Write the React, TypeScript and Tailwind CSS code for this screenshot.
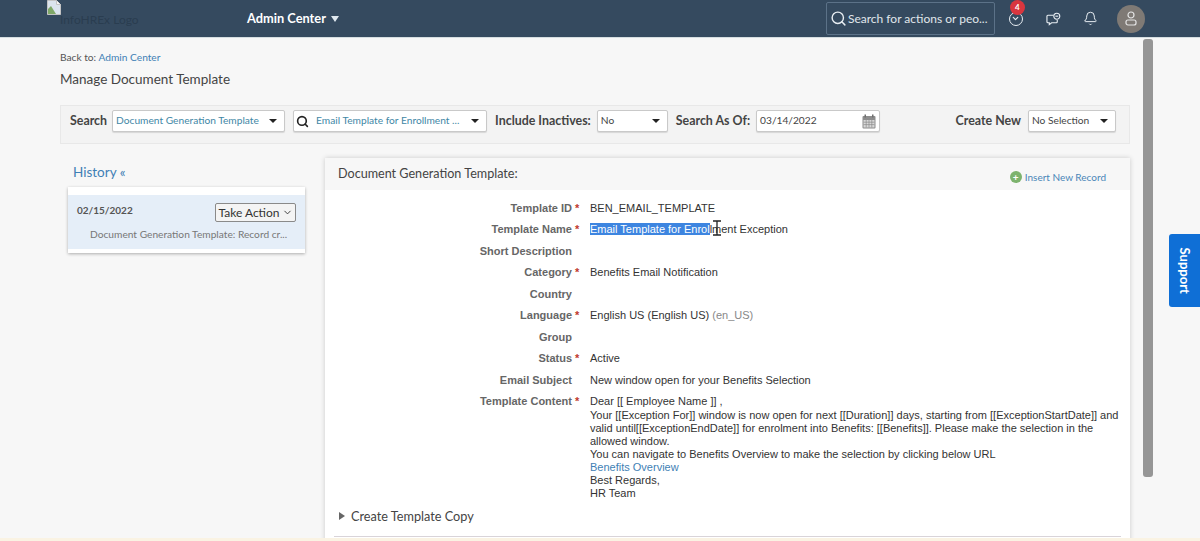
import { Bell, ChevronDown, Search } from "lucide-react";

const sans = "font-['Lato','Open_Sans',sans-serif]";

function Caret() {
  return <span className="ml-auto h-0 w-0 shrink-0 border-x-[4px] border-t-[4px] border-x-transparent border-t-[#222]" />;
}

function Select(props: { text: string; width: string; blue?: boolean; icon?: boolean }) {
  return (
    <div className={`flex h-[22px] items-center rounded-[2px] border border-[#c9c9c9] bg-white pl-[3px] pr-[7px] shadow-[0_1px_1px_rgba(0,0,0,0.12)] ${props.width}`}>
      {props.icon && <Search size={13} strokeWidth={3} className="mr-[7px] ml-[-1px] text-[#222]" />}
      <span className={`text-[10.2px] whitespace-nowrap ${props.blue ? "text-[#3f87a6]" : "text-[#444]"}`}>{props.text}</span>
      <Caret />
    </div>
  );
}

function BarLabel(props: { text: string; className?: string }) {
  return <span className={`mt-[1px] text-[12.4px] leading-[20px] font-bold whitespace-nowrap text-[#444] ${props.className ?? ""}`}>{props.text}</span>;
}

function Row(props: { label: string; required?: boolean; children?: React.ReactNode; height?: string }) {
  return (
    <div className={`flex items-start ${props.height ?? "h-[21.5px]"}`}>
      <div className="w-[247px] text-right text-[11px] leading-[13px] font-bold whitespace-nowrap text-[#666]">{props.label}</div>
      <div className="w-[18px] pl-[3px] text-[11px] leading-[13px] font-bold text-[#c0392b]">{props.required ? "*" : ""}</div>
      <div className="text-[11px] leading-[13px] text-[#333]">{props.children}</div>
    </div>
  );
}

function CalendarIcon() {
  return (
    <svg className="ml-auto" width="14" height="15" viewBox="0 0 14 15">
      <rect x="0.5" y="2" width="13" height="12.5" rx="1" fill="#8c8c8c" />
      <rect x="2.5" y="0.5" width="1.5" height="3" fill="#6f6f6f" />
      <rect x="10" y="0.5" width="1.5" height="3" fill="#6f6f6f" />
      <path d="M1.5 6h11v7.5h-11z" fill="#d8d8d8" />
      <path d="M1.5 8.2h11M1.5 10.6h11M4.2 6v7.5M7 6v7.5M9.8 6v7.5" stroke="#8c8c8c" strokeWidth="0.7" />
    </svg>
  );
}

function BrokenImage() {
  return (
    <svg className="absolute top-0 left-0" width="14" height="15" viewBox="0 0 14 15">
      <path d="M0.5 0.5h9l4 4v10h-13z" fill="#dbe4ee" stroke="#c4c4c4" />
      <path d="M9.5 0.5v4h4" fill="#f5f5f5" stroke="#c4c4c4" />
      <path d="M1 14V9l3-3 5 8z" fill="#7fa868" />
    </svg>
  );
}

export default function App() {
  return (
    <div className={`relative flex h-[541px] w-[1200px] flex-col overflow-hidden bg-[#f7f7f7] ${sans}`}>
      <header className="flex h-[38px] shrink-0 items-center border-b border-[#d5dde0] bg-[#354a5f]">
        <div className="relative ml-[47px] h-full w-[200px]">
          <BrokenImage />
          <span className="absolute top-[11px] left-[13px] text-[12px] text-[#2a3d50]">InfoHREx Logo</span>
        </div>
        <div className="flex items-center gap-[5px] text-[12.8px] font-bold text-white">
          Admin Center
          <span className="mt-[1px] h-0 w-0 border-x-[4.5px] border-t-[6px] border-x-transparent border-t-[#dfe8ef]" />
        </div>
        <div className="ml-[487px] flex h-[33px] w-[169px] items-center rounded-[2px] border border-[#5c7288] pl-[3px]">
          <Search size={17} strokeWidth={2} className="text-[#e8eef3]" />
          <span className="mt-[1px] ml-[1px] text-[12px] whitespace-nowrap text-[#e0e7ec]">Search for actions or peo...</span>
        </div>
        <div className="relative ml-[14px] flex h-[14px] w-[14px] items-center justify-center rounded-full border-[1.5px] border-[#e8eef3]">
          <ChevronDown size={9} strokeWidth={3} className="text-[#e8eef3]" />
          <span className="absolute top-[-13px] left-[0px] flex h-[15px] w-[15px] items-center justify-center rounded-full bg-[#d9363e] text-[8px] font-bold text-white">4</span>
        </div>
        <svg className="ml-[23px]" width="15" height="14" viewBox="0 0 16 14" fill="none" stroke="#e8eef3" strokeWidth="1.2">
          <path d="M8 3H2a1 1 0 0 0-1 1v6a1 1 0 0 0 1 1h1.5v2L6 11h5a1 1 0 0 0 1-1V8" />
          <circle cx="11.5" cy="4" r="3.2" />
          <path d="M10 4h3" />
        </svg>
        <Bell size={15} strokeWidth={1.6} className="ml-[22px] text-[#e8eef3]" />
        <div className="ml-[19px] flex h-[28px] w-[28px] items-center justify-center rounded-full bg-[#7f7a75]">
          <svg width="12" height="15" viewBox="0 0 12 15" fill="none" stroke="#e4e4e4" strokeWidth="1.2">
            <circle cx="6" cy="4" r="3" />
            <rect x="1" y="9" width="10" height="5" rx="2" />
          </svg>
        </div>
      </header>

      <div className="flex min-h-0 flex-1">
        <main className="w-[1143px] shrink-0 pl-[60px] pr-[13px]">
          <div className="mt-[13px] text-[10.2px] leading-[13px] text-[#555]">
            Back to: <span className="text-[#3f7fb5]">Admin Center</span>
          </div>
          <h1 className="mt-[6px] text-[13.5px] leading-[18px] font-normal text-[#444]">Manage Document Template</h1>

          <div className="mt-[17px] flex h-[39px] items-start border border-[#e8e8e8] bg-[#f3f3f3] pt-[4px] pr-[13px] pl-[9px]">
            <BarLabel text="Search" className="mr-[5px]" />
            <Select text="Document Generation Template" width="w-[173px]" blue />
            <div className="w-[8px] shrink-0" />
            <Select text="Email Template for Enrollment ..." width="w-[194px]" blue icon />
            <BarLabel text="Include Inactives:" className="ml-[8px] mr-[6px]" />
            <Select text="No" width="w-[71px]" />
            <BarLabel text="Search As Of:" className="ml-[8px] mr-[6px]" />
            <div className="flex h-[22px] w-[124px] items-center rounded-[2px] border border-[#c9c9c9] bg-white pr-[3px] pl-[3px] shadow-[0_1px_1px_rgba(0,0,0,0.12)]">
              <span className="text-[10.2px] text-[#444]">03/14/2022</span>
              <CalendarIcon />
            </div>
            <BarLabel text="Create New" className="ml-auto mr-[7px]" />
            <Select text="No Selection" width="w-[88px]" />
          </div>

          <div className="mt-[14px] flex">
            <aside className="w-[245px] shrink-0 pl-[8px]">
              <div className="mt-[4px] pl-[5px] text-[13.5px] leading-[20px] text-[#3f7fb5]">History «</div>
              <div className="mt-[5px] bg-white pt-[8px] pb-[4px] shadow-[0_1px_3px_rgba(0,0,0,0.3)]">
                <div className="h-[54px] bg-[#e5eef8] pt-[8px] pr-[9px] pl-[9px]">
                  <div className="flex items-start justify-between">
                    <span className="text-[10px] font-bold text-[#555]">02/15/2022</span>
                    <span className="flex h-[19px] w-[81px] items-center justify-center gap-[2px] rounded-[2px] border border-[#8a8a8a] bg-[#f4f4f4] text-[12px] text-[#333]">
                      Take Action <ChevronDown size={11} />
                    </span>
                  </div>
                  <div className="mt-[5px] pl-[13px] text-[10.2px] whitespace-nowrap text-[#777]">Document Generation Template: Record cr...</div>
                </div>
              </div>
            </aside>

            <section className="ml-[20px] h-[392px] w-[805px] bg-white shadow-[0_0_5px_rgba(0,0,0,0.18)]">
              <div className="flex h-[32px] items-center bg-[#f7f7f7] pr-[24px] pl-[13px]">
                <span className="text-[12.6px] text-[#444]">Document Generation Template:</span>
                <span className="mt-[6px] ml-auto flex items-center gap-[3px] text-[10px] text-[#4a86b8]">
                  <span className="flex h-[12px] w-[12px] items-center justify-center rounded-full bg-[#7db36e] text-[10px] leading-none font-bold text-white">+</span>
                  Insert New Record
                </span>
              </div>
              <div className="pt-[11.5px] font-['Liberation_Sans',Arial,sans-serif]">
                <Row label="Template ID" required>BEN_EMAIL_TEMPLATE</Row>
                <Row label="Template Name" required>
                  <span className="relative">
                    <span className="bg-[#3d85e0] text-white">Email Template for Enrol</span>lment Exception
                    <svg className="absolute top-[-3px] left-[122px]" width="10" height="16" viewBox="0 0 10 16" fill="none" stroke="#222" strokeWidth="1.3">
                      <path d="M1 1h8M5 1v14M1 15h8" />
                    </svg>
                  </span>
                </Row>
                <Row label="Short Description" />
                <Row label="Category" required>Benefits Email Notification</Row>
                <Row label="Country" />
                <Row label="Language" required>English US (English US) <span className="text-[#888]">(en_US)</span></Row>
                <Row label="Group" />
                <Row label="Status" required>Active</Row>
                <Row label="Email Subject">New window open for your Benefits Selection</Row>
                <Row label="Template Content" required height="h-[111.5px]">
                  <div className="w-[530px]">
                    <div className="mb-[1px]">Dear [[ Employee Name ]] ,</div>
                    Your [[Exception For]] window is now open for next [[Duration]] days, starting from [[ExceptionStartDate]] and valid until[[ExceptionEndDate]] for enrolment into Benefits: [[Benefits]]. Please make the selection in the allowed window.<br />
                    You can navigate to Benefits Overview to make the selection by clicking below URL<br />
                    <span className="text-[#3f7fb5]">Benefits Overview</span><br />
                    Best Regards,<br />
                    HR Team
                  </div>
                </Row>
              </div>
              <div className="flex items-center gap-[6px] pl-[14px] text-[12.7px] text-[#444]">
                <span className="h-0 w-0 border-y-[4.5px] border-l-[6px] border-y-transparent border-l-[#666]" />
                Create Template Copy
              </div>
              <div className="mx-[9px] mt-[10px] border-t border-[#d9d4d9]" />
            </section>
          </div>
        </main>
        <div className="mt-[1px] h-[438px] w-[10px] rounded-[3px] bg-[#969696]" />
      </div>

      <div className="absolute top-[234px] right-0 flex h-[73px] w-[31px] items-center justify-center rounded-l-[3px] bg-[#0f6fd6]">
        <span className="rotate-90 text-[13px] font-bold text-white">Support</span>
      </div>
      <div className="absolute bottom-0 left-0 h-[3px] w-full bg-[#faf3e3]" />
    </div>
  );
}
